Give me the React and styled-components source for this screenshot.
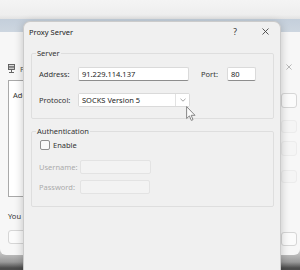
import React from "react";
import styled, { createGlobalStyle } from "styled-components";

const Global = createGlobalStyle`
  html, body { margin: 0; padding: 0; }
  body { font-family: "Noto Sans", "Open Sans", sans-serif; }
`;

const Desktop = styled.div`
  position: relative;
  width: 300px;
  height: 270px;
  overflow: hidden;
  padding-top: 19px;
  box-sizing: border-box;
  display: flex;
  flex-direction: column;
  background: linear-gradient(
    to bottom,
    #f4f4f4 0,
    #eeeeee 15px,
    #e2e2e2 19px,
    #d0d0d0 250px,
    #9a9a9a 262px,
    #4c4c4c 268px
  );
`;

const BackWindow = styled.div`
  height: 236px;
  background: #f7f7f7;
  border-radius: 0 0 6px 6px;
  display: flex;
  flex-direction: column;
  overflow: hidden;
`;

const BackTitle = styled.div`
  height: 13px;
  background: linear-gradient(to bottom, #c4cfdb, #cdd6e0);
`;

const BackBody = styled.div`
  flex: 1;
  display: flex;
  justify-content: space-between;
`;

const LeftPane = styled.div`
  width: 70px;
  padding: 31px 0 0 8px;
  display: flex;
  flex-direction: column;
`;

const ToolRow = styled.div`
  height: 12px;
  display: flex;
  align-items: center;
  gap: 5px;
  font-size: 7.5px;
  color: #555;
`;

const ListBox = styled.div`
  margin-top: 5px;
  height: 117px;
  background: #ffffff;
  border: 1px solid #a9a9a9;
  padding: 9px 0 0 4px;
  font-size: 7.5px;
  color: #333;
  box-sizing: border-box;
`;

const Hint = styled.div`
  margin-top: 14px;
  font-size: 7.5px;
  color: #333;
`;

const BackButton = styled.div`
  margin-top: ${(p) => p.$top || 0}px;
  width: ${(p) => p.$w}px;
  height: ${(p) => p.$h || 14}px;
  box-sizing: border-box;
  border: 1px solid ${(p) => (p.$faint ? "#ececec" : "#d6d6d6")};
  border-radius: 3px;
  background: ${(p) => (p.$faint ? "#f5f5f5" : "#fbfbfb")};
`;

const RightPane = styled.div`
  width: 19px;
  padding-top: 32px;
  display: flex;
  flex-direction: column;
  align-items: flex-start;
`;

const BackClose = styled.div`
  padding-left: 5px;
  height: 8px;
  display: flex;
`;

const Dialog = styled.div`
  position: absolute;
  left: 23px;
  top: 21px;
  width: 258px;
  height: 260px;
  box-sizing: border-box;
  background: #f0f0f0;
  border: 1px solid #cbcbcb;
  border-bottom: none;
  border-radius: 7px 7px 0 0;
  box-shadow: 0 2px 10px rgba(0, 0, 0, 0.22);
  display: flex;
  flex-direction: column;
`;

const TitleBar = styled.div`
  height: 19px;
  display: flex;
  align-items: center;
  padding: 0 0 0 5px;
  font-size: 7.5px;
  color: #222;
`;

const TitleText = styled.div`
  flex: 1;
`;

const TitleButton = styled.div`
  width: ${(p) => p.$w}px;
  display: flex;
  justify-content: center;
  align-items: center;
  font-size: 8.5px;
  color: #333;
`;

const Body = styled.div`
  padding: 0 6px 0 7px;
  display: flex;
  flex-direction: column;
`;

const Group = styled.fieldset`
  margin: 7px 0 0 0;
  padding: ${(p) => p.$pad};
  border: 1px solid #dedede;
  border-radius: 2px;
  display: flex;
  flex-direction: column;
  gap: ${(p) => p.$gap}px;
  min-width: 0;
`;

const Legend = styled.legend`
  padding: 0 1px;
  margin-left: -3px;
  font-size: 7.5px;
  line-height: 10px;
  color: #333;
`;

const Row = styled.div`
  display: flex;
  align-items: center;
  height: ${(p) => p.$h || 14}px;
`;

const Label = styled.div`
  width: ${(p) => p.$w}px;
  flex-shrink: 0;
  font-size: 7.5px;
  color: ${(p) => (p.$disabled ? "#ababab" : "#333")};
`;

const Input = styled.div`
  width: ${(p) => p.$w}px;
  height: 14px;
  box-sizing: border-box;
  border: 1px solid ${(p) => (p.$disabled ? "#e3e3e3" : "#dadada")};
  border-bottom-color: ${(p) => (p.$disabled ? "#e3e3e3" : "#8d8d8d")};
  border-radius: 2px;
  background: ${(p) => (p.$disabled ? "#f3f3f3" : "#ffffff")};
  padding: 0 3px;
  display: flex;
  align-items: center;
  font-size: 7.5px;
  color: #1c1c1c;
  flex-shrink: 0;
`;

const Select = styled.div`
  width: 112px;
  height: 14px;
  box-sizing: border-box;
  display: flex;
  border: 1px solid #dadada;
  border-radius: 2px;
  background: #f7f7f7;
`;

const SelectValue = styled.div`
  flex: 1;
  display: flex;
  align-items: center;
  padding: 0 3px;
  font-size: 7.5px;
  color: #1c1c1c;
  background: #ffffff;
  border-right: 1px solid #e2e2e2;
`;

const Chevron = styled.div`
  width: 13px;
  display: flex;
  align-items: center;
  justify-content: center;
  background: #ffffff;
`;

const Check = styled.div`
  width: 10px;
  height: 10px;
  box-sizing: border-box;
  border: 1px solid #8f8f8f;
  border-radius: 2px;
  background: #f9f9f9;
  margin-left: 1px;
  margin-right: 3px;
`;

const CheckLabel = styled.div`
  font-size: 7.5px;
  color: #333;
`;

const Cursor = styled.svg`
  position: absolute;
  left: 186px;
  top: 106px;
`;

const CloseIcon = ({ size = 7, color = "#444" }) => (
  <svg width={size} height={size} viewBox="0 0 7 7">
    <path d="M0.5 0.5 L6.5 6.5 M6.5 0.5 L0.5 6.5" stroke={color} strokeWidth="0.9" fill="none" />
  </svg>
);

const ServerIcon = () => (
  <svg width="7" height="10" viewBox="0 0 7 10">
    <rect x="0.5" y="0.5" width="6" height="5" fill="none" stroke="#555" strokeWidth="0.9" />
    <path d="M1 2.3 H6 M1 3.8 H6 M3.5 5.5 V8 M1 8.5 H6" stroke="#555" strokeWidth="0.9" fill="none" />
  </svg>
);

export default function App() {
  return (
    <>
      <Global />
      <Desktop>
        <BackWindow>
          <BackTitle />
          <BackBody>
            <LeftPane>
              <ToolRow>
                <ServerIcon />
                <span>Proxy</span>
              </ToolRow>
              <ListBox>Address</ListBox>
              <Hint>You can</Hint>
              <BackButton $top={9} $w={60} />
            </LeftPane>
            <RightPane>
              <BackClose>
                <CloseIcon size={6} color="#a5a5a5" />
              </BackClose>
              <BackButton $top={21} $w={16} $h={15} />
              <BackButton $top={12} $w={16} $h={13} $faint />
              <BackButton $top={8} $w={16} $h={15} $faint />
              <BackButton $top={14} $w={16} $h={13} $faint />
              <BackButton $top={49} $w={16} $h={14} />
            </RightPane>
          </BackBody>
        </BackWindow>

        <Dialog>
          <TitleBar>
            <TitleText>Proxy Server</TitleText>
            <TitleButton $w={30}>?</TitleButton>
            <TitleButton $w={30}>
              <CloseIcon />
            </TitleButton>
          </TitleBar>
          <Body>
            <Group $pad="9px 0 11px 7px" $gap={12}>
              <Legend>Server</Legend>
              <Row>
                <Label $w={39}>Address:</Label>
                <Input $w={111}>91.229.114.137</Input>
                <Label $w={26} style={{ marginLeft: 12 }}>Port:</Label>
                <Input $w={29}>80</Input>
              </Row>
              <Row>
                <Label $w={39}>Protocol:</Label>
                <Select>
                  <SelectValue>SOCKS Version 5</SelectValue>
                  <Chevron>
                    <svg width="6" height="4" viewBox="0 0 6 4">
                      <path d="M0.5 0.8 L3 3.2 L5.5 0.8" stroke="#8a8a8a" strokeWidth="0.8" fill="none" />
                    </svg>
                  </Chevron>
                </Select>
              </Row>
            </Group>
            <Group $pad="3px 0 12px 7px" $gap={0}>
              <Legend>Authentication</Legend>
              <Row $h={12}>
                <Check />
                <CheckLabel>Enable</CheckLabel>
              </Row>
              <Row style={{ marginTop: 9 }}>
                <Label $w={41} $disabled>Username:</Label>
                <Input $w={71} $disabled />
              </Row>
              <Row style={{ marginTop: 6 }}>
                <Label $w={41} $disabled>Password:</Label>
                <Input $w={70} $disabled />
              </Row>
            </Group>
          </Body>
        </Dialog>

        <Cursor width="10" height="16" viewBox="0 0 10 16">
          <path
            d="M0.6 0.6 L0.6 12.5 L3.4 9.9 L5.3 14.4 L7 13.7 L5.2 9.3 L9 9.3 Z"
            fill="#fafafa"
            stroke="#7a7a7a"
            strokeWidth="0.9"
            strokeLinejoin="round"
          />
        </Cursor>
      </Desktop>
    </>
  );
}
